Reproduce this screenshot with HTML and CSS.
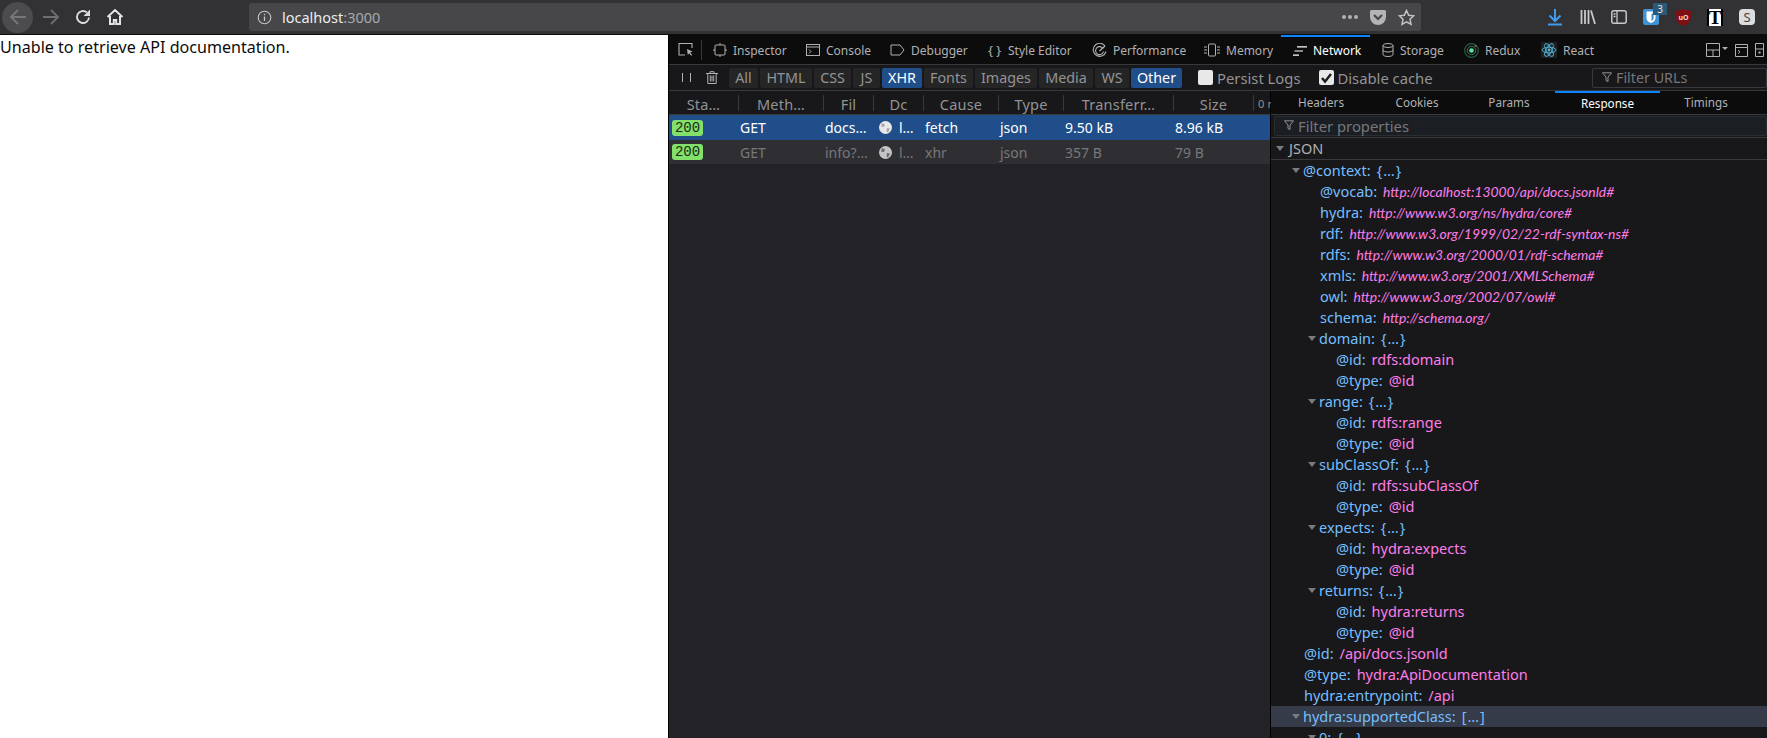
FILE: index.html
```html
<!DOCTYPE html>
<html lang="en">
<head>
<meta charset="utf-8">
<title>localhost:3000</title>
<link rel="stylesheet" href="styles.css">
</head>
<body>
<header class="chrome">
  <div class="nav">
    <span class="back"><svg width="20" height="20" viewBox="0 0 20 20"><path d="M18 10H3.500M10 3 3 10l7 7" fill="none" stroke="#77777a" stroke-width="1.800"/></svg></span>
    <span class="nav-btn"><svg width="20" height="20" viewBox="0 0 20 20"><path d="M2 10h15M10 3l7 7-7 7" fill="none" stroke="#6f6f72" stroke-width="1.800"/></svg></span>
    <span class="nav-btn"><svg width="18" height="18" viewBox="0 0 18 18"><path d="M15 9.500A6 6 0 1 1 12.800 4.300" fill="none" stroke="#dcdcdc" stroke-width="1.900"/><path d="M16 1.500v6.500H9.500z" fill="#dcdcdc"/></svg></span>
    <span class="nav-btn"><svg width="18" height="18" viewBox="0 0 18 18"><path d="M1.500 9 9 2l7.500 7M4 8v8h3.800v-4h2.400v4H14V8" fill="none" stroke="#e4e4e4" stroke-width="2"/></svg></span>
  </div>
  <div class="urlbar">
    <svg class="info" width="15" height="15" viewBox="0 0 15 15"><circle cx="7.500" cy="7.500" r="6.300" fill="none" stroke="#c4c4c6" stroke-width="1.100"/><path d="M7.500 6.500v4.500M7.500 3.800v1.500" stroke="#c4c4c6" stroke-width="1.300"/></svg>
    <span class="host">localhost<span class="port">:3000</span></span>
    <span class="url-end">
      <svg width="16" height="6" viewBox="0 0 16 6"><circle cx="2" cy="3" r="2" fill="#b1b1b3"/><circle cx="8" cy="3" r="2" fill="#b1b1b3"/><circle cx="14" cy="3" r="2" fill="#b1b1b3"/></svg>
      <svg width="16" height="15" viewBox="0 0 16 15"><path d="M1.500 0h13A1.500 1.500 0 0 1 16 1.500V7A8 8 0 0 1 0 7V1.500A1.500 1.500 0 0 1 1.500 0z" fill="#b4b4b6"/><path d="M4 5l4 4 4-4" fill="none" stroke="#47474a" stroke-width="2.200"/></svg>
      <svg width="17" height="17" viewBox="0 0 17 17"><path d="m8.500 1.500 2.200 4.700 5 .6-3.700 3.500 1 5-4.500-2.500L4 15.300l1-5L1.300 6.800l5-.6z" fill="none" stroke="#c4c4c6" stroke-width="1.500"/></svg>
    </span>
  </div>
  <div class="tools">
    <svg class="t-down" width="16" height="18" viewBox="0 0 16 18"><path d="M8 1v11M2.500 7.500 8 13l5.500-5.500" fill="none" stroke="#3f9bf0" stroke-width="2"/><path d="M1 16.500h14" stroke="#3f9bf0" stroke-width="2"/></svg>
    <svg class="t-lib" width="16" height="14" viewBox="0 0 16 14"><path d="M1.500 0v14M5 0v14M8.500 0v14M11 .5l4 13.500" fill="none" stroke="#c8c8ca" stroke-width="1.800"/></svg>
    <svg class="t-side" width="16" height="14" viewBox="0 0 16 14"><rect x=".8" y=".8" width="14.400" height="12.400" rx="2" fill="none" stroke="#c8c8ca" stroke-width="1.500"/><path d="M6 1v12M2.500 4H4.500M2.500 6.500H4.500" stroke="#c8c8ca" stroke-width="1.300"/></svg>
    <span class="t-ext">
      <svg width="16" height="16" viewBox="0 0 16 16"><rect width="16" height="16" rx="2" fill="#3d93d3"/><path d="M3.500 2.500h9V9c0 2.500-2 4.200-4.500 5C5.500 13.200 3.500 11.500 3.500 9z" fill="#fff"/><path d="M8.500 4.500h2.200V9c0 1.300-1 2.400-2.200 3z" fill="#3d93d3"/></svg>
      <span class="badge">3</span>
    </span>
    <svg class="t-ublock" width="15" height="17" viewBox="0 0 15 17"><path d="M7.500 0 15 2.200V8c0 4.500-3.500 7.500-7.500 9C3.500 15.500 0 12.500 0 8V2.200z" fill="#800f14"/><text x="7.500" y="10.500" class="ublock-text">uO</text></svg>
    <span class="t-tt">T</span>
    <span class="t-s">S</span>
  </div>
</header>

<main class="split">
  <section class="page">Unable to retrieve API documentation.</section>
  <section class="devtools">
    <nav class="dt-tabs">
      <span class="picker"><svg width="16" height="15" viewBox="0 0 16 15"><path d="M14 6V1.500H1V13h6" fill="none" stroke="#b1b1b3" stroke-width="1.100"/><path d="m9 7 5.500 2.500-2.300 1 2 2.500-1 .8-2-2.500L9.800 13z" fill="#b1b1b3"/></svg></span>
      <span class="dt-sep"></span>
      <span class="dt-tab w-ins"><svg width="14" height="14" viewBox="0 0 14 14"><rect x="2" y="2" width="10" height="10" rx="1" fill="none" stroke="#b1b1b3"/><path d="M7 0v2M7 12v2M0 7h2M12 7h2" stroke="#b1b1b3"/></svg>Inspector</span>
      <span class="dt-tab w-con"><svg width="14" height="12" viewBox="0 0 14 12"><rect x=".5" y=".5" width="13" height="11" fill="none" stroke="#b1b1b3"/><path d="M.5 3h13M3 5.500 5 7.500 3 9.500" fill="none" stroke="#b1b1b3"/></svg>Console</span>
      <span class="dt-tab w-dbg"><svg width="15" height="12" viewBox="0 0 15 12"><path d="M1 1h9l4 5-4 5H1z" fill="none" stroke="#b1b1b3" stroke-linejoin="round"/></svg>Debugger</span>
      <span class="dt-tab w-sty"><span class="braces">{ }</span>Style Editor</span>
      <span class="dt-tab w-perf"><svg width="15" height="15" viewBox="0 0 15 15"><path d="M13 3A6.500 6.500 0 1 0 14 8.500M11 5.500A4 4 0 1 0 11.500 8.500" fill="none" stroke="#b1b1b3" stroke-width="1.100"/><path d="M7.500 8 13 3" stroke="#b1b1b3" stroke-width="1.300"/></svg>Performance</span>
      <span class="dt-tab w-mem"><svg width="16" height="14" viewBox="0 0 16 14"><rect x="4.500" y="1" width="7" height="12" rx="1" fill="none" stroke="#b1b1b3"/><path d="M0 4h3M0 7h3M0 10h3M13 4h3M13 7h3M13 10h3" stroke="#b1b1b3"/></svg>Memory</span>
      <span class="dt-tab active w-net"><svg width="14" height="10" viewBox="0 0 14 10"><path d="M4 .8h10M1.500 5H10M0 9.200h6" stroke="#fff" stroke-width="1.200"/></svg>Network</span>
      <span class="dt-tab w-sto"><svg width="12" height="14" viewBox="0 0 12 14"><ellipse cx="6" cy="2.500" rx="5" ry="2" fill="none" stroke="#b1b1b3"/><path d="M1 2.500v9c0 1 2.200 2 5 2s5-1 5-2v-9M1 7c0 1 2.200 2 5 2s5-1 5-2" fill="none" stroke="#b1b1b3"/></svg>Storage</span>
      <span class="dt-tab w-red"><svg width="15" height="15" viewBox="0 0 15 15"><circle cx="7.500" cy="7.500" r="6.800" fill="none" stroke="#2c5a45" stroke-width="1.200"/><circle cx="7.500" cy="7.500" r="4.200" fill="none" stroke="#2f7d5b"/><circle cx="7.500" cy="7.500" r="2.300" fill="#5fe3a0"/><circle cx="11.500" cy="3" r="1" fill="#d9543f"/></svg>Redux</span>
      <span class="dt-tab w-rea"><svg class="react" width="16" height="16" viewBox="0 0 16 16"><g fill="none" stroke="#55b5d8" stroke-width=".9"><ellipse cx="8" cy="8" rx="7" ry="2.800"/><ellipse cx="8" cy="8" rx="7" ry="2.800" transform="rotate(60 8 8)"/><ellipse cx="8" cy="8" rx="7" ry="2.800" transform="rotate(120 8 8)"/></g><circle cx="8" cy="8" r="1.400" fill="#55b5d8"/></svg>React</span>
      <span class="dt-end">
        <svg width="22" height="14" viewBox="0 0 22 14"><path d="M.5.500h13v13H.5zM.5 7h13M7 7v6.500" fill="none" stroke="#b1b1b3"/><path d="m16 4 3 3 3-3z" fill="#b1b1b3"/></svg>
        <svg width="13" height="13" viewBox="0 0 13 13"><path d="M.5.500h12v12H.5zM.5 3.500h12M3 6l2 1.800L3 9.500" fill="none" stroke="#b1b1b3"/></svg>
        <svg width="9" height="14" viewBox="0 0 9 14"><path d="M.5.500h8v13h-8zM.5 6h8" fill="none" stroke="#b1b1b3"/><rect x="3.500" y="8.500" width="2" height="2" fill="#b1b1b3"/></svg>
      </span>
    </nav>

    <div class="dt-filters">
      <span class="pause"></span>
      <svg class="trash" width="12" height="13" viewBox="0 0 12 13"><path d="M0 2.500h12M4 2.500V.7h4v1.800M1.800 2.500V12.500h8.400V2.500M4.300 4.500v6M6 4.500v6M7.700 4.500v6" fill="none" stroke="#b1b1b3"/></svg>
      <span class="chips">
        <span class="chip c-all">All</span><span class="chip c-html">HTML</span><span class="chip c-css">CSS</span><span class="chip c-js">JS</span><span class="chip on c-xhr">XHR</span><span class="chip c-fon">Fonts</span><span class="chip c-img">Images</span><span class="chip c-med">Media</span><span class="chip c-ws">WS</span><span class="chip on c-oth">Other</span>
      </span>
      <label class="check persist"><span class="box"></span>Persist Logs</label>
      <label class="check disable"><span class="box"><svg width="13" height="12" viewBox="0 0 13 12"><path d="m2 6 3 3.500L11 2" fill="none" stroke="#1b1b1d" stroke-width="2.400"/></svg></span>Disable cache</label>
      <span class="url-filter"><svg width="10" height="11" viewBox="0 0 10 11"><path d="M.5.800h9L6 5v4.500L4 8.500V5z" fill="none" stroke="#939395"/></svg>Filter URLs</span>
    </div>

    <div class="panes">
      <div class="requests">
        <div class="req-head">
          <span class="col c1">Sta…</span><span class="col c2">Meth…</span><span class="col c3">Fil</span><span class="col c4">Dc</span><span class="col c5">Cause</span><span class="col c6">Type</span><span class="col c7">Transferr…</span><span class="col c8">Size</span><span class="col c9">0 r</span>
        </div>
        <div class="req selected">
          <span class="cell c1"><span class="status">200</span></span><span class="cell c2">GET</span><span class="cell c3">docs…</span><span class="cell c4"><svg class="globe" width="13" height="13" viewBox="0 0 13 13"><circle cx="6.500" cy="6.500" r="6.500" fill="#e8e8ea"/><path d="M3 2 6 3.500 5 6 2 5.500zM8 7l3 .5-2 4-1.500-1z" fill="#a8a8ac"/></svg>l…</span><span class="cell c5">fetch</span><span class="cell c6">json</span><span class="cell c7">9.50 kB</span><span class="cell c8">8.96 kB</span>
        </div>
        <div class="req dim">
          <span class="cell c1"><span class="status">200</span></span><span class="cell c2">GET</span><span class="cell c3">info?…</span><span class="cell c4"><svg class="globe" width="13" height="13" viewBox="0 0 13 13"><circle cx="6.500" cy="6.500" r="6.500" fill="#c4c4c6"/><path d="M3 2 6 3.500 5 6 2 5.500zM8 7l3 .5-2 4-1.500-1z" fill="#6a6a6e"/></svg>l…</span><span class="cell c5">xhr</span><span class="cell c6">json</span><span class="cell c7">357 B</span><span class="cell c8">79 B</span>
        </div>
      </div>
      <aside class="details">
        <div class="side-tabs">
          <span class="side-tab s-hea">Headers</span><span class="side-tab s-std">Cookies</span><span class="side-tab s-std">Params</span><span class="side-tab active s-res">Response</span><span class="side-tab s-std">Timings</span>
        </div>
        <div class="prop-filter"><span class="prop-input"><svg width="10" height="11" viewBox="0 0 10 11"><path d="M.5.800h9L6 5v4.500L4 8.500V5z" fill="none" stroke="#939395"/></svg>Filter properties</span></div>
        <div class="json-head"><span class="tw"></span>JSON</div>
        <ul class="tree">
          <li class="l1"><span class="tw"></span><span class="k">@context:</span><span class="b">{…}</span></li>
          <li class="l2"><span class="k">@vocab:</span><i class="u url">http://localhost:13000/api/docs.jsonld#</i></li>
          <li class="l2"><span class="k">hydra:</span><i class="u url">http://www.w3.org/ns/hydra/core#</i></li>
          <li class="l2"><span class="k">rdf:</span><i class="u url">http://www.w3.org/1999/02/22-rdf-syntax-ns#</i></li>
          <li class="l2"><span class="k">rdfs:</span><i class="u url">http://www.w3.org/2000/01/rdf-schema#</i></li>
          <li class="l2"><span class="k">xmls:</span><i class="u url">http://www.w3.org/2001/XMLSchema#</i></li>
          <li class="l2"><span class="k">owl:</span><i class="u url">http://www.w3.org/2002/07/owl#</i></li>
          <li class="l2"><span class="k">schema:</span><i class="u url">http://schema.org/</i></li>
          <li class="l2t"><span class="tw"></span><span class="k">domain:</span><span class="b">{…}</span></li>
          <li class="l3"><span class="k">@id:</span><span class="u">rdfs:domain</span></li>
          <li class="l3"><span class="k">@type:</span><span class="u">@id</span></li>
          <li class="l2t"><span class="tw"></span><span class="k">range:</span><span class="b">{…}</span></li>
          <li class="l3"><span class="k">@id:</span><span class="u">rdfs:range</span></li>
          <li class="l3"><span class="k">@type:</span><span class="u">@id</span></li>
          <li class="l2t"><span class="tw"></span><span class="k">subClassOf:</span><span class="b">{…}</span></li>
          <li class="l3"><span class="k">@id:</span><span class="u">rdfs:subClassOf</span></li>
          <li class="l3"><span class="k">@type:</span><span class="u">@id</span></li>
          <li class="l2t"><span class="tw"></span><span class="k">expects:</span><span class="b">{…}</span></li>
          <li class="l3"><span class="k">@id:</span><span class="u">hydra:expects</span></li>
          <li class="l3"><span class="k">@type:</span><span class="u">@id</span></li>
          <li class="l2t"><span class="tw"></span><span class="k">returns:</span><span class="b">{…}</span></li>
          <li class="l3"><span class="k">@id:</span><span class="u">hydra:returns</span></li>
          <li class="l3"><span class="k">@type:</span><span class="u">@id</span></li>
          <li class="l1p"><span class="k">@id:</span><span class="u">/api/docs.jsonld</span></li>
          <li class="l1p"><span class="k">@type:</span><span class="u">hydra:ApiDocumentation</span></li>
          <li class="l1p"><span class="k">hydra:entrypoint:</span><span class="u">/api</span></li>
          <li class="l1 hover"><span class="tw"></span><span class="k">hydra:supportedClass:</span><span class="b">[…]</span></li>
          <li class="l2t"><span class="tw"></span><span class="k">0:</span><span class="b">{…}</span></li>
        </ul>
      </aside>
    </div>
  </section>
</main>
</body>
</html>
```

FILE: styles.css
```css
* { box-sizing: border-box; }
html, body { margin: 0; height: 100%; overflow: hidden; background: #fff; }
body { font-family: "Noto Sans", "Open Sans", sans-serif; display: flex; flex-direction: column; height: 738px; }
svg { flex: none; display: block; }

.chrome { height: 35px; flex: none; background: #323234; border-bottom: 1px solid #0c0c0d; display: flex; align-items: center; }
.nav { width: 249px; display: flex; align-items: center; flex: none; padding-left: 2px; }
.back { width: 31px; height: 31px; border-radius: 50%; background: #4c4c4f; display: flex; align-items: center; justify-content: center; margin-right: 8px; }
.nav-btn { width: 20px; margin-right: 12px; display: flex; justify-content: center; }
.urlbar { width: 1172px; height: 28px; background: #47474a; border-radius: 3px; display: flex; align-items: center; padding: 0 6px 0 8px; flex: none; font-size: 14.500px; }
.info { margin-right: 10px; }
.host { color: #ececec; font-family: "Noto Sans", sans-serif; }
.port { color: #a8a8aa; }
.url-end { margin-left: auto; display: flex; align-items: center; gap: 12px; }
.tools { flex: 1; display: flex; align-items: center; position: relative; height: 34px; }
.t-down { margin-left: 126px; }
.t-lib { margin-left: 17px; }
.t-side { margin-left: 15px; }
.t-ext { margin-left: 16px; position: relative; display: block; }
.badge { position: absolute; left: 10px; top: -6px; background: #2b5877; color: #e6e6e6; font-size: 10px; line-height: 12px; width: 14px; text-align: center; }
.t-ublock { margin-left: 17px; }
.ublock-text { font: 700 7px "Noto Sans", sans-serif; fill: #f2d6d6; text-anchor: middle; }
.t-tt { margin-left: 16px; width: 16px; height: 17px; background: #fff; color: #000; font: 700 19px/17px "Liberation Serif", serif; text-align: center; border-left: 2px solid #000; border-right: 2px solid #000; display: flex; justify-content: center; }
.t-s { margin-left: 16px; width: 16px; height: 16px; border-radius: 4px; background: #dcdcdc; color: #444; font-size: 13px; line-height: 16px; text-align: center; }

.split { flex: 1; display: flex; min-height: 0; }
.page { width: 668px; flex: none; background: #fff; color: #0c0c0d; font-size: 16.100px; line-height: 22px; padding-top: 1px; }
.devtools { flex: 1; background: #232327; color: #b1b1b3; display: flex; flex-direction: column; min-width: 0; border-left: 1px solid #000; }

.dt-tabs { height: 30px; flex: none; background: #0c0c0d; border-bottom: 1px solid #38383d; display: flex; align-items: center; font-size: 12px; }
.picker { width: 26px; padding-left: 9px; }
.dt-sep { width: 1px; height: 20px; background: #38383d; margin-left: 6px; }
.dt-tab { height: 29px; display: flex; align-items: center; gap: 6px; padding: 1px 0 0 11px; color: #b1b1b3; flex: none; }
.dt-tab.active { color: #fff; border-top: 2px solid #0a84ff; padding-top: 0; }
.braces { font-size: 13px; width: 14px; white-space: nowrap; }
.w-ins { width: 93px; } .w-con { width: 84px; } .w-dbg { width: 98px; } .w-sty { width: 104px; }
.w-perf { width: 112px; } .w-mem { width: 88px; } .w-net { width: 89px; padding-left: 12px; } .w-sto { width: 82px; padding-left: 12px; }
.w-red { width: 77px; padding-left: 12px; } .w-rea { width: 60px; padding-left: 12px; }
.react { background: #1e2124; }
.dt-end { position: absolute; right: 3px; top: 43px; display: flex; align-items: center; gap: 7px; }

.dt-filters { height: 26px; flex: none; background: #18181a; border-bottom: 1px solid #38383d; display: flex; align-items: center; font-size: 14.300px; color: #939395; }
.pause { width: 9px; height: 9px; border-left: 1px solid #b1b1b3; border-right: 1px solid #b1b1b3; margin-left: 13px; }
.trash { margin-left: 15px; }
.chips { display: flex; gap: 2px; margin-left: 11px; }
.chip { height: 20px; line-height: 20px; background: #252526; border-radius: 2px; text-align: center; color: #939395; }
.chip.on { background: #204e8a; color: #fff; }
.c-all { width: 29px; } .c-html { width: 52px; } .c-css { width: 37px; } .c-js { width: 27px; } .c-xhr { width: 40px; }
.c-fon { width: 49px; } .c-img { width: 62px; } .c-med { width: 54px; } .c-ws { width: 34px; } .c-oth { width: 51px; }
.check { display: flex; align-items: center; gap: 4px; font-size: 14.800px; }
.box { width: 15px; height: 15px; background: #e8e8e8; border-radius: 2px; display: flex; align-items: center; justify-content: center; }
.persist { margin-left: 16px; }
.disable { margin-left: 18px; }
.url-filter { margin-left: auto; width: 175px; height: 20px; border: 1px solid #38383d; border-radius: 2px; display: flex; align-items: center; gap: 4px; padding-left: 9px; font-size: 14.300px; color: #77777a; }

.panes { flex: 1; display: flex; min-height: 0; }
.requests { width: 602px; flex: none; background: #232327; border-right: 1px solid #000; }
.req-head { height: 24px; background: #18181a; border-bottom: 1px solid #38383d; display: flex; align-items: center; font-size: 14.500px; letter-spacing: .2px; color: #939395; }
.col { height: 16px; line-height: 18px; text-align: center; border-right: 1px solid #38383d; white-space: nowrap; flex: none; }
.col:last-child { border-right: 0; font-size: 11px; text-align: left; padding-left: 4px; }
.c1 { width: 70px; } .c2 { width: 85px; } .c3 { width: 50px; } .c4 { width: 50px; } .c5 { width: 75px; }
.c6 { width: 65px; } .c7 { width: 110px; } .c8 { width: 80px; } .c9 { width: 16px; }
.req { height: 25px; display: flex; align-items: center; font-size: 14px; }
.req.selected { background: #204e8a; color: #fff; }
.req.dim { height: 24px; background: #2f2f33; color: #77777a; }
.cell { flex: none; white-space: nowrap; display: flex; align-items: center; gap: 7px; padding-left: 1px; }
.cell.c1 { padding-left: 3px; }
.status { width: 31px; height: 16px; border-radius: 3px; background: #83e06a; color: #1a2a14; font: 14px/16px "Liberation Mono", monospace; text-align: center; }
.req .c4 { padding-left: 5px; }

.details { flex: 1; min-width: 0; background: #18181a; display: flex; flex-direction: column; overflow: hidden; }
.side-tabs { height: 24px; flex: none; background: #0c0c0d; border-bottom: 1px solid #38383d; display: flex; font-size: 11.700px; }
.side-tab { text-align: center; line-height: 23px; color: #b1b1b3; }
.s-hea { width: 100px; } .s-std { width: 92px; } .s-res { width: 105px; }
.side-tab.active { color: #fff; border-top: 2px solid #0a84ff; line-height: 21px; }
.prop-filter { height: 23px; flex: none; background: #18181a; border-bottom: 1px solid #38383d; padding: 1px 0 1px 3px; }
.prop-input { height: 20px; background: #1b1f24; border: 1px solid #2a2d31; border-radius: 2px; display: flex; align-items: center; gap: 4px; padding: 0 0 1px 9px; font-size: 14.800px; color: #77777a; }
.json-head { height: 22px; flex: none; border-bottom: 1px solid #38383d; font-size: 14.500px; color: #b1b1b3; display: flex; align-items: center; padding: 0 0 1px 5px; gap: 5px; }
.tw { width: 0; height: 0; border: 4.500px solid transparent; border-top: 5.500px solid #7b7b7e; border-bottom: 0; flex: none; }
.tree { list-style: none; margin: 0; padding: 0; font-size: 14.500px; }
.tree li { height: 21px; line-height: 21px; display: flex; align-items: center; white-space: nowrap; color: #75bfff; }
.k { margin-right: 6px; }
.b { color: #75bfff; letter-spacing: 1px; }
.u { color: #ff7de9; }
.url { font-family: "Lato", "Noto Sans", sans-serif; font-size: 13.900px; }
.l1 { padding-left: 21px; }
.l1 .tw, .l2t .tw { margin-right: 3px; }
.l1p { padding-left: 33px; }
.l2 { padding-left: 49px; }
.l2t { padding-left: 37px; }
.l3 { padding-left: 65px; }
.hover { background: #353b48; }
```
